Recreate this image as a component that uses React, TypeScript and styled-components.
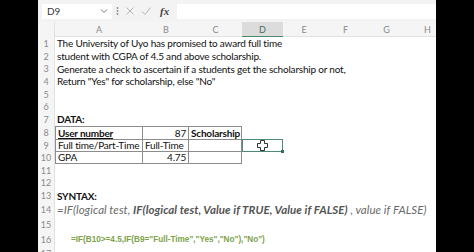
import React from 'react';
import styled, { createGlobalStyle } from 'styled-components';

const GlobalStyle = createGlobalStyle`
  html, body {
    margin: 0;
    padding: 0;
    background: #000;
  }
  body {
    font-family: 'Lato', 'Liberation Sans', sans-serif;
  }
`;

const COLS = '17px 88px 46px 53px 41px 42px 41px 41px 41px';

const Frame = styled.div`
  display: flex;
  justify-content: center;
  width: 474px;
  height: 252px;
  overflow: hidden;
  background: #000;
`;

const Sheet = styled.div`
  width: 398px;
  height: 252px;
  background: #fff;
  overflow: hidden;
  display: flex;
  flex-direction: column;
`;

const FormulaBar = styled.div`
  height: 22px;
  flex: none;
  display: flex;
  align-items: center;
  background: #f3f3f3;
  padding: 0 0 0 4px;
`;

const NameBox = styled.div`
  width: 70px;
  height: 15px;
  background: #fff;
  display: flex;
  align-items: center;
  justify-content: space-between;
  padding: 0 4px 0 5px;
  box-sizing: border-box;
  font-size: 10px;
  color: #333;
`;

const BarIcons = styled.div`
  display: flex;
  align-items: center;
  gap: 6px;
  padding: 0 8px 0 4px;
  color: #9a9a9a;
`;

const Fx = styled.span`
  font-family: 'Liberation Serif', serif;
  font-style: italic;
  font-weight: bold;
  font-size: 11px;
  color: #444;
  margin-left: 3px;
`;

const FormulaInput = styled.div`
  flex: 1;
  height: 15px;
  background: #fff;
`;

const Grid = styled.div`
  display: flex;
  flex-direction: column;
`;

const HeaderRow = styled.div`
  display: grid;
  grid-template-columns: ${COLS};
  height: 15px;
  background: #f5f5f5;
`;

const ColHead = styled.div<{ $active?: boolean }>`
  display: flex;
  align-items: center;
  justify-content: center;
  font-size: 9px;
  color: ${(p) => (p.$active ? '#3f6f55' : '#8a8a8a')};
  background: ${(p) => (p.$active ? '#dcdcdc' : 'transparent')};
  box-sizing: border-box;
  border-bottom: 1px solid ${(p) => (p.$active ? '#4a8a6a' : '#e2e2e2')};
`;

const Row = styled.div<{ $h: number }>`
  display: grid;
  grid-template-columns: ${COLS};
  height: ${(p) => p.$h}px;
  font-size: 10px;
  letter-spacing: -0.2px;
  color: #111;
`;

const RowHead = styled.div`
  display: flex;
  align-items: center;
  justify-content: center;
  font-size: 9px;
  letter-spacing: 0;
  color: #8a8a8a;
  background: #f5f5f5;
  border-right: 1px solid #e2e2e2;
`;

const Cell = styled.div<{
  $right?: boolean;
  $bold?: boolean;
  $boxed?: boolean;
  $selected?: boolean;
}>`
  position: relative;
  display: flex;
  align-items: center;
  justify-content: ${(p) => (p.$right ? 'flex-end' : 'flex-start')};
  padding: 0 2px;
  white-space: nowrap;
  overflow: visible;
  font-weight: ${(p) => (p.$bold ? 700 : 400)};
  box-sizing: border-box;
  border-right: ${(p) => (p.$boxed ? '1px solid #8c8c8c' : 'none')};
  border-bottom: ${(p) => (p.$boxed ? '1px solid #8c8c8c' : 'none')};
  ${(p) => p.$selected && `border: 1px solid #4f8a74; justify-content: center;`}
`;

const Underline = styled.span`
  text-decoration: underline;
`;

const Handle = styled.span`
  position: absolute;
  right: -2px;
  bottom: -2px;
  width: 3px;
  height: 3px;
  background: #2f6f52;
`;

const Syntax = styled.span`
  font-family: 'Lato', 'Open Sans', sans-serif;
  font-style: italic;
  font-size: 11.5px;
  color: #6a6a6a;
  letter-spacing: 0.05px;
`;

const SyntaxStrong = styled.span`
  font-weight: 700;
  color: #555;
`;

const Formula = styled.span`
  font-family: 'Liberation Sans', sans-serif;
  font-size: 8.2px;
  font-weight: 700;
  letter-spacing: 0;
  color: #7da24a;
  padding-left: 14px;
`;

const Cursor = () => (
  <svg width="11" height="11" viewBox="0 0 11 11">
    <path
      d="M3.5 0.5h4v3h3v4h-3v3h-4v-3h-3v-4h3z"
      fill="#fff"
      stroke="#333"
      strokeWidth="1"
    />
  </svg>
);

const Chevron = () => (
  <svg width="8" height="6" viewBox="0 0 8 6">
    <path d="M1 1.5l3 3 3-3" fill="none" stroke="#777" strokeWidth="1" />
  </svg>
);

const Dots = () => (
  <svg width="3" height="10" viewBox="0 0 3 10">
    <circle cx="1.5" cy="2" r="0.9" fill="#888" />
    <circle cx="1.5" cy="5" r="0.9" fill="#888" />
    <circle cx="1.5" cy="8" r="0.9" fill="#888" />
  </svg>
);

const Cross = () => (
  <svg width="10" height="10" viewBox="0 0 10 10">
    <path d="M1.5 1.5l7 7M8.5 1.5l-7 7" stroke="#b5b5b5" strokeWidth="1" />
  </svg>
);

const Check = () => (
  <svg width="10" height="10" viewBox="0 0 10 10">
    <path d="M1 5.5l3 3 5.5-7" fill="none" stroke="#b5b5b5" strokeWidth="1" />
  </svg>
);

const columns = ['A', 'B', 'C', 'D', 'E', 'F', 'G', 'H'];

type CellSpec = {
  text?: React.ReactNode;
  right?: boolean;
  bold?: boolean;
  boxed?: boolean;
  selected?: boolean;
};

const rows: { n: number; h: number; cells: CellSpec[] }[] = [
  { n: 1, h: 12.7, cells: [{ text: 'The University of Uyo has promised to award full time' }] },
  { n: 2, h: 12.7, cells: [{ text: 'student with CGPA of 4.5 and above scholarship.' }] },
  {
    n: 3,
    h: 12.7,
    cells: [
      { text: 'Generate a check to ascertain if a students get the scholarship or not,' },
    ],
  },
  { n: 4, h: 12.7, cells: [{ text: 'Return "Yes" for scholarship, else "No"' }] },
  { n: 5, h: 12.7, cells: [] },
  { n: 6, h: 12.7, cells: [] },
  { n: 7, h: 12.7, cells: [{ text: 'DATA:', bold: true }] },
  {
    n: 8,
    h: 12.7,
    cells: [
      { text: <Underline>User number</Underline>, bold: true, boxed: true },
      { text: '87', right: true, boxed: true },
      { text: 'Scholarship', bold: true, boxed: true },
    ],
  },
  {
    n: 9,
    h: 12.7,
    cells: [
      { text: 'Full time/Part-Time', boxed: true },
      { text: 'Full-Time', boxed: true },
      { boxed: true },
      { selected: true },
    ],
  },
  {
    n: 10,
    h: 12.7,
    cells: [
      { text: 'GPA', boxed: true },
      { text: '4.75', right: true, boxed: true },
      { boxed: true },
    ],
  },
  { n: 11, h: 12.7, cells: [] },
  { n: 12, h: 12.7, cells: [] },
  { n: 13, h: 12.7, cells: [{ text: 'SYNTAX:', bold: true }] },
  {
    n: 14,
    h: 15.5,
    cells: [
      {
        text: (
          <Syntax>
            =IF(logical test,{' '}
            <SyntaxStrong>IF(logical test, Value if TRUE, Value if FALSE)</SyntaxStrong> , value
            if FALSE)
          </Syntax>
        ),
      },
    ],
  },
  { n: 15, h: 15, cells: [] },
  {
    n: 16,
    h: 15,
    cells: [{ text: <Formula>=IF(B10&gt;=4.5,IF(B9="Full-Time","Yes","No"),"No")</Formula> }],
  },
  { n: 17, h: 12.7, cells: [] },
];

const boxBorder = '1px solid #8c8c8c';

export default function App() {
  return (
    <Frame>
      <GlobalStyle />
      <Sheet>
        <FormulaBar>
          <NameBox>
            D9
            <Chevron />
          </NameBox>
          <BarIcons>
            <Dots />
            <Cross />
            <Check />
            <Fx>fx</Fx>
          </BarIcons>
          <FormulaInput />
        </FormulaBar>
        <Grid>
          <HeaderRow>
            <RowHead />
            {columns.map((c) => (
              <ColHead key={c} $active={c === 'D'}>
                {c}
              </ColHead>
            ))}
          </HeaderRow>
          {rows.map((r) => (
            <Row key={r.n} $h={r.h}>
              <RowHead>{r.n}</RowHead>
              {columns.map((c, i) => {
                const spec = r.cells[i] || {};
                const edge: React.CSSProperties = {};
                if (spec.boxed && i === 0) edge.borderLeft = boxBorder;
                if (spec.boxed && r.n === 8) edge.borderTop = boxBorder;
                return (
                  <Cell
                    key={c}
                    $right={spec.right}
                    $bold={spec.bold}
                    $boxed={spec.boxed}
                    $selected={spec.selected}
                    style={spec.boxed ? edge : undefined}
                  >
                    {spec.text}
                    {spec.selected && (
                      <>
                        <Cursor />
                        <Handle />
                      </>
                    )}
                  </Cell>
                );
              })}
            </Row>
          ))}
        </Grid>
      </Sheet>
    </Frame>
  );
}
